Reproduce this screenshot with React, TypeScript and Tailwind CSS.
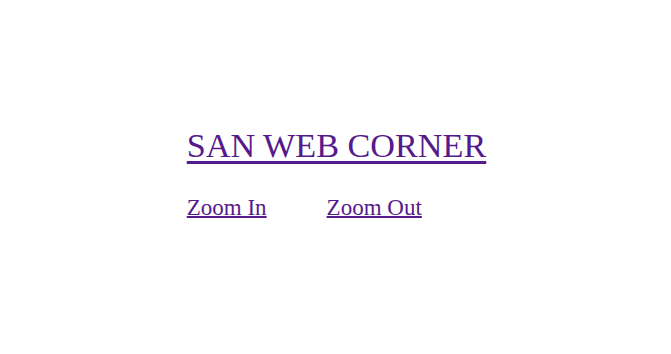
export default function App() {
  return (
    <div className="flex h-[354px] w-full justify-center bg-white pl-[2px] font-['Liberation_Serif',serif] text-[#551a8b]">
      <div className="pt-[126px]">
        <a href="#" className="block text-[34.2px] leading-[40px] underline decoration-[3px] underline-offset-[4px]">
          SAN WEB CORNER
        </a>
        <div className="mt-[29px] flex gap-[60px] text-[23px] leading-[26px]">
          <a href="#" className="underline decoration-[1.5px]">Zoom In</a>
          <a href="#" className="underline decoration-[1.5px]">Zoom Out</a>
        </div>
      </div>
    </div>
  );
}
